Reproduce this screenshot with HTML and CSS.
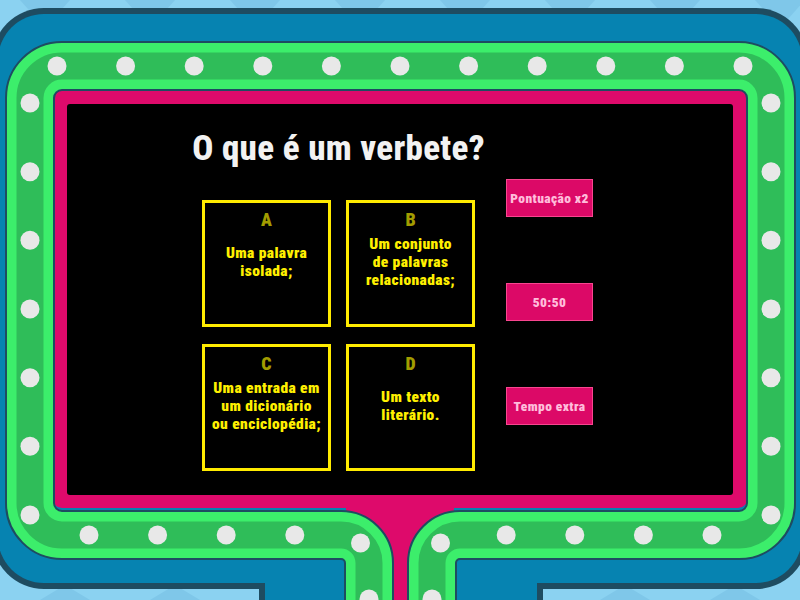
FILE: index.html
```html
<!DOCTYPE html>
<html lang="pt">
<head>
<meta charset="utf-8">
<title>O que é um verbete?</title>
<link rel="stylesheet" href="styles.css">
</head>
<body>
<div class="stage">
  <svg class="frame" width="800" height="600" viewBox="0 0 800 600" xmlns="http://www.w3.org/2000/svg">
    <g fill="#7fc7e9">
      <polygon points="20,0 45,28 70,0"/>
      <polygon points="125,0 150,28 175,0"/>
      <polygon points="230,0 255,28 280,0"/>
      <polygon points="335,0 360,28 385,0"/>
      <polygon points="440,0 465,28 490,0"/>
      <polygon points="545,0 570,28 595,0"/>
      <polygon points="650,0 675,28 700,0"/>
      <polygon points="755,0 780,28 805,0"/>
      <polygon points="40,600 65,585 90,600"/>
      <polygon points="150,600 175,585 200,600"/>
      <polygon points="600,600 625,585 650,600"/>
      <polygon points="710,600 735,585 760,600"/>
    </g>
    <rect x="-8" y="8" width="816" height="581" rx="52" fill="#1e4c61"/>
    <rect x="259" y="540" width="284" height="80" fill="#1e4c61"/>
    <rect x="-2" y="14" width="804" height="569" rx="46" fill="#0683b1"/>
    <rect x="265" y="540" width="272" height="80" fill="#0683b1"/>
    <rect x="52" y="90" width="696" height="418" rx="10" fill="#de0a6b"/>
    <rect x="346" y="495" width="108" height="65" fill="#de0a6b"/>
    <rect x="385" y="555" width="31" height="60" fill="#de0a6b"/>
    <g fill="none" stroke-linejoin="round">
      <path stroke="#1e4c61" stroke-width="50" d="M369 640 V563 A28 28 0 0 0 341 535 H62 A32 32 0 0 1 30 503 V98 A32 32 0 0 1 62 66 H739 A32 32 0 0 1 771 98 V503 A32 32 0 0 1 739 535 H460 A28 28 0 0 0 432 563 V640"/>
      <path stroke="#3cee6b" stroke-width="46" d="M369 640 V563 A28 28 0 0 0 341 535 H62 A32 32 0 0 1 30 503 V98 A32 32 0 0 1 62 66 H739 A32 32 0 0 1 771 98 V503 A32 32 0 0 1 739 535 H460 A28 28 0 0 0 432 563 V640"/>
      <path stroke="#2fbd59" stroke-width="27" d="M369 640 V563 A28 28 0 0 0 341 535 H62 A32 32 0 0 1 30 503 V98 A32 32 0 0 1 62 66 H739 A32 32 0 0 1 771 98 V503 A32 32 0 0 1 739 535 H460 A28 28 0 0 0 432 563 V640"/>
    </g>
    <rect x="67" y="104" width="666" height="391" rx="3" fill="#000"/>
    <g fill="#e8e8e8">
      <circle cx="57" cy="66" r="9.5"/><circle cx="125.6" cy="66" r="9.5"/><circle cx="194.2" cy="66" r="9.5"/>
      <circle cx="262.8" cy="66" r="9.5"/><circle cx="331.4" cy="66" r="9.5"/><circle cx="400" cy="66" r="9.5"/>
      <circle cx="468.6" cy="66" r="9.5"/><circle cx="537.2" cy="66" r="9.5"/><circle cx="605.8" cy="66" r="9.5"/>
      <circle cx="674.4" cy="66" r="9.5"/><circle cx="743" cy="66" r="9.5"/>
      <circle cx="30" cy="103" r="9.5"/><circle cx="30" cy="171.7" r="9.5"/><circle cx="30" cy="240.3" r="9.5"/>
      <circle cx="30" cy="309" r="9.5"/><circle cx="30" cy="377.7" r="9.5"/><circle cx="30" cy="446.3" r="9.5"/>
      <circle cx="30" cy="515" r="9.5"/>
      <circle cx="771" cy="103" r="9.5"/><circle cx="771" cy="171.7" r="9.5"/><circle cx="771" cy="240.3" r="9.5"/>
      <circle cx="771" cy="309" r="9.5"/><circle cx="771" cy="377.7" r="9.5"/><circle cx="771" cy="446.3" r="9.5"/>
      <circle cx="771" cy="515" r="9.5"/>
      <circle cx="89" cy="535" r="9.5"/><circle cx="157.6" cy="535" r="9.5"/><circle cx="226.2" cy="535" r="9.5"/>
      <circle cx="294.8" cy="535" r="9.5"/><circle cx="360.5" cy="543" r="9.5"/><circle cx="369" cy="599" r="9.5"/>
      <circle cx="712" cy="535" r="9.5"/><circle cx="643.4" cy="535" r="9.5"/><circle cx="574.8" cy="535" r="9.5"/>
      <circle cx="506.2" cy="535" r="9.5"/><circle cx="440.5" cy="543" r="9.5"/><circle cx="432" cy="599" r="9.5"/>
    </g>
  </svg>
  <div class="screen">
    <div class="main">
      <div class="title"><span>O que é um verbete?</span></div>
      <div class="answers">
        <div class="answer"><div class="letter">A</div><div class="text">Uma palavra<br>isolada;</div></div>
        <div class="answer"><div class="letter">B</div><div class="text">Um conjunto<br>de palavras<br>relacionadas;</div></div>
        <div class="answer"><div class="letter">C</div><div class="text">Uma entrada em<br>um dicionário<br>ou enciclopédia;</div></div>
        <div class="answer"><div class="letter">D</div><div class="text">Um texto<br>literário.</div></div>
      </div>
    </div>
    <div class="powers">
      <div class="power">Pontuação x2</div>
      <div class="power">50:50</div>
      <div class="power">Tempo extra</div>
    </div>
  </div>
</div>
</body>
</html>
```

FILE: styles.css
```css
html, body {
  margin: 0;
  padding: 0;
  background: #8bd2f1;
}

.stage {
  position: relative;
  width: 800px;
  height: 600px;
  overflow: hidden;
  box-sizing: border-box;
  padding: 104px 0 0 67px;
  font-family: "Liberation Sans Narrow", "Roboto Condensed", "Open Sans", sans-serif;
  font-weight: 800;
}

.frame {
  position: absolute;
  left: 0;
  top: 0;
}

.screen {
  position: relative;
  width: 666px;
  height: 391px;
  box-sizing: border-box;
  padding-left: 135px;
  display: flex;
  gap: 31px;
}

.main {
  width: 273px;
  display: flex;
  flex-direction: column;
}

.title {
  height: 96px;
  box-sizing: border-box;
  padding-top: 25px;
  display: flex;
  justify-content: center;
  align-items: flex-start;
  font-size: 35px;
  line-height: 39px;
  letter-spacing: 0.3px;
  color: #f2f2f2;
  white-space: nowrap;
}

.answers {
  display: grid;
  grid-template-columns: 129px 129px;
  column-gap: 15px;
  row-gap: 17px;
}

.answer {
  height: 127px;
  box-sizing: border-box;
  border: 3px solid #ffeb00;
  display: flex;
  flex-direction: column;
  align-items: center;
}

.letter {
  margin-top: 6px;
  font-size: 18px;
  line-height: 21px;
  font-weight: 900;
  color: #a29c00;
}

.text {
  height: 64px;
  display: flex;
  align-items: center;
  justify-content: center;
  text-align: center;
  font-size: 15.5px;
  line-height: 18px;
  letter-spacing: 0.4px;
  font-weight: 900;
  color: #fff000;
  white-space: nowrap;
}

.powers {
  width: 87px;
  padding-top: 75px;
  display: flex;
  flex-direction: column;
  gap: 66px;
}

.power {
  height: 38px;
  box-sizing: border-box;
  border: 1.5px solid #f8468f;
  background: #dc0967;
  color: #ffbddb;
  font-size: 13.5px;
  letter-spacing: 0.4px;
  font-weight: 900;
  display: flex;
  align-items: center;
  justify-content: center;
  white-space: nowrap;
}
```
